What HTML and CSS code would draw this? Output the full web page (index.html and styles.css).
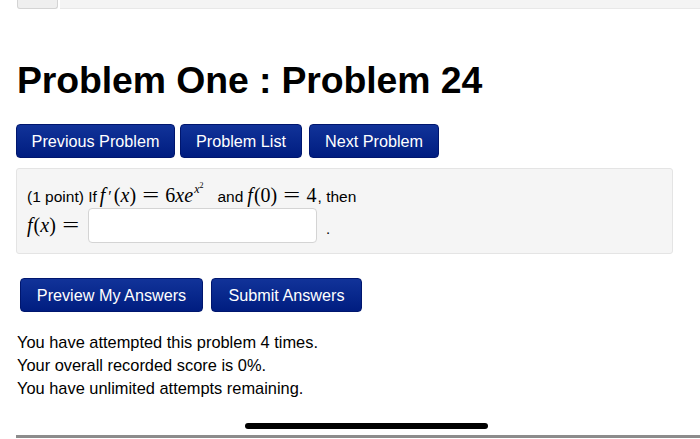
FILE: index.html
```html
<!DOCTYPE html>
<html>
<head>
<meta charset="utf-8">
<link rel="stylesheet" href="styles.css">
</head>
<body>
<div class="topbar"><span class="tab"></span><span class="strip"></span></div>
<main class="page">
  <h1 class="title">Problem One : Problem 24</h1>
  <nav class="nav">
    <button class="btn btn-prev">Previous Problem</button>
    <button class="btn btn-list">Problem List</button>
    <button class="btn btn-next">Next Problem</button>
  </nav>
  <section class="problem">
    <div class="line1"><span class="txt">(1 point) If</span><span class="m m1"><i class="fi">f</i><span class="prime">′</span>(<i>x</i>)<span class="eq">=</span>6<i>x</i><i>e</i><sup><i>x</i><span class="sq">2</span></sup></span><span class="txt">and</span><span class="m m2"><i class="fi">f</i>(0)<span class="eq">=</span>4</span><span class="txt">, then</span></div>
    <div class="line2"><span class="m lhs"><i class="fi">f</i>(<i>x</i>)<span class="eq">=</span></span><input class="answer" type="text"><span class="dot">.</span></div>
  </section>
  <div class="actions">
    <button class="btn btn-preview">Preview My Answers</button>
    <button class="btn btn-submit">Submit Answers</button>
  </div>
  <div class="status">
    <p>You have attempted this problem 4 times.</p>
    <p>Your overall recorded score is 0%.</p>
    <p>You have unlimited attempts remaining.</p>
  </div>
  <hr class="rule">
</main>
<div class="home-indicator"></div>
</body>
</html>
```
FILE: styles.css
```css
html, body {
  margin: 0;
  padding: 0;
  background: #ffffff;
  font-family: "Liberation Sans", Arial, sans-serif;
  color: #000;
  width: 700px;
  height: 439px;
  overflow: hidden;
}
.topbar {
  display: flex;
  height: 9px;
  margin-left: 17px;
  gap: 2px;
}
.tab {
  width: 39px;
  height: 8px;
  background: #efefef;
  border: 1px solid #d4d4d4;
  border-top: none;
  border-radius: 0 0 3px 3px;
}
.strip {
  flex: 1;
  background: #f4f4f4;
  border-bottom: 1px solid #e8e8e8;
}
.page {
  padding: 0 0 0 16px;
}
.title {
  margin: 49px 0 0 1px;
  font-size: 37.4px;
  line-height: 44px;
  font-weight: bold;
  letter-spacing: -0.1px;
}
.nav {
  display: flex;
  gap: 5px;
  margin-top: 22px;
}
.btn {
  font-family: "Liberation Sans", Arial, sans-serif;
  font-size: 16.2px;
  color: #fff;
  height: 34px;
  padding: 0;
  white-space: nowrap;
  text-align: center;
  border: 1px solid #00166e;
  border-radius: 4px;
  background: linear-gradient(#113399, #001d80);
  line-height: 32px;
}
.btn-prev { width: 159px; }
.btn-list { width: 122px; }
.btn-next { width: 130px; margin-left: 2px; }
.problem {
  margin-top: 10px;
  width: 657px;
  box-sizing: border-box;
  height: 86px;
  background: #f5f5f5;
  border: 1px solid #e4e4e4;
  border-radius: 3px;
  padding: 15px 10px 0 10px;
  font-size: 15px;
}
.line1 {
  line-height: 23px;
  white-space: nowrap;
  display: flex;
  align-items: baseline;
}
.txt {
  font-size: 15.5px;
}
.m {
  font-family: "Liberation Serif", "Times New Roman", serif;
  font-size: 20px;
}
.m i { font-style: italic; }
.fi { margin-right: 1px; }
.prime {
  font-size: 16px;
  margin: 0 2px 0 2px;
}
.m1 { margin: 0 14px 0 3px; }
.m2 { margin: 0 1px 0 4px; }
.eq {
  display: inline-block;
  transform: scaleX(1.5);
  margin: 0 9px 0 9px;
}
sup {
  font-size: 12px;
  vertical-align: 9px;
  line-height: 0;
  margin-left: 1px;
}
.sq {
  font-size: 8px;
  vertical-align: 5px;
}
.line2 {
  display: flex;
  align-items: center;
  margin-top: 0;
}
.lhs {
  width: 61px;
}
.answer {
  width: 229px;
  height: 35px;
  box-sizing: border-box;
  border: 1px solid #d4d4d4;
  border-radius: 4px;
  background: #fff;
  margin: 0;
}
.dot {
  margin-left: 9px;
  font-size: 15px;
  position: relative;
  top: 3px;
}
.actions {
  display: flex;
  gap: 8px;
  margin: 24px 0 0 4px;
}
.btn-preview { width: 183px; }
.btn-submit { width: 151px; }
.status {
  margin-top: 19px;
  font-size: 16.4px;
  line-height: 23px;
}
.status p {
  margin: 0 0 0 1px;
}
.rule {
  margin: 35px 0 0 0;
  border: none;
  height: 3px;
  background: #8c8c8c;
}
.home-indicator {
  position: absolute;
  left: 245px;
  top: 423px;
  width: 243px;
  height: 6px;
  border-radius: 3px;
  background: #000;
}
```
